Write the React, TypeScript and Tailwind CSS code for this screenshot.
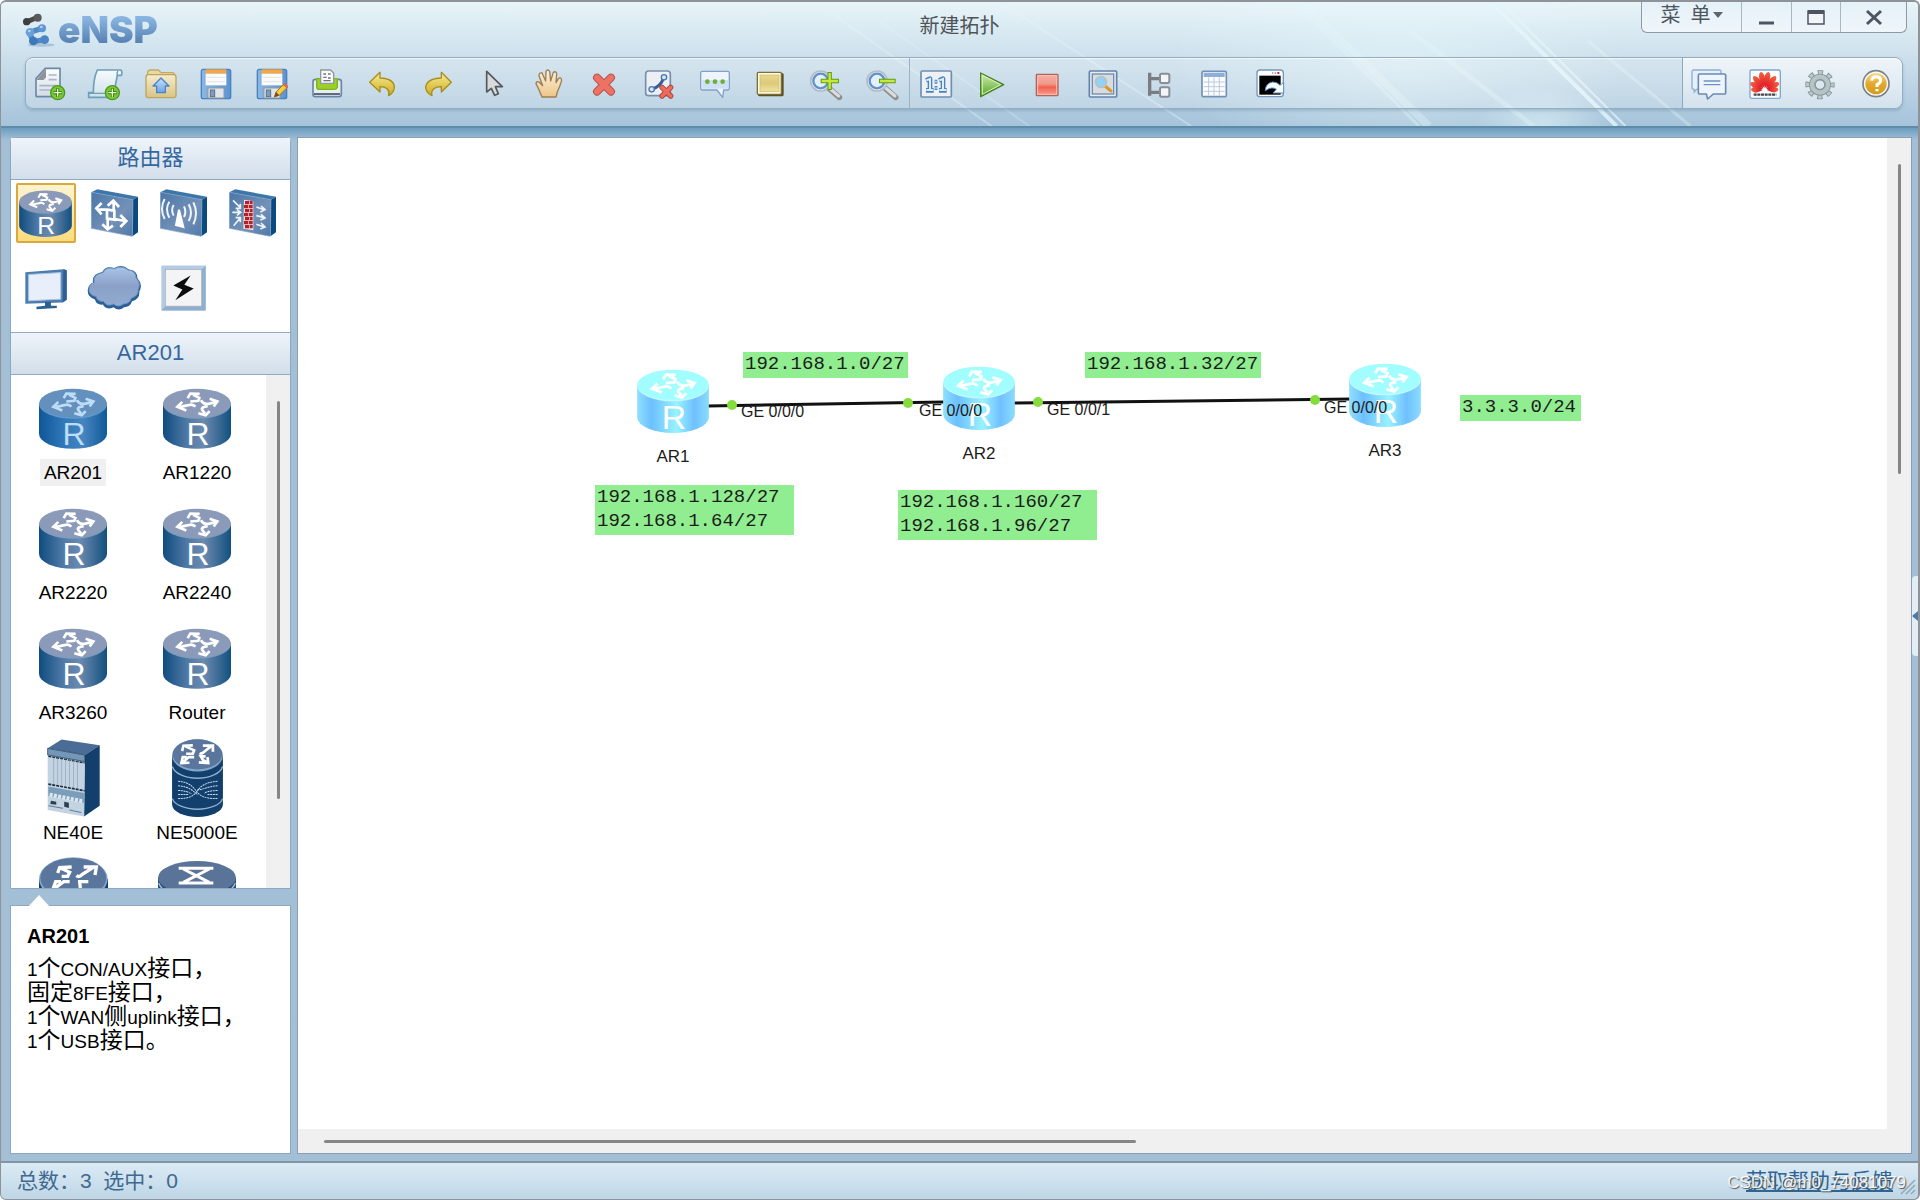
import React from "react";

type IconProps = { left: number; children: React.ReactNode };

/* Toolbar drawings share one 108-unit square, three units to the pixel. */
function ToolIcon({ left, children }: IconProps) {
  return (
    <svg className="size-9 shrink-0" viewBox={`${left - 54} 195 108 108`} aria-hidden="true">
      {children}
    </svg>
  );
}

function Defs() {
  return (
    <svg className="absolute size-0" aria-hidden="true">
      <defs>
        <linearGradient id="body" x1="0" x2="1">
          <stop offset="0" stopColor="#0f4c7f" />
          <stop offset="0.35" stopColor="#4f79a7" />
          <stop offset="0.6" stopColor="#6b8aaf" />
          <stop offset="1" stopColor="#12507f" />
        </linearGradient>
        <linearGradient id="bodySelected" x1="0" x2="1">
          <stop offset="0" stopColor="#0e5698" />
          <stop offset="0.35" stopColor="#2f77b8" />
          <stop offset="0.65" stopColor="#4585c0" />
          <stop offset="1" stopColor="#105a98" />
        </linearGradient>
        <linearGradient id="bodyLive" x1="0" x2="1">
          <stop offset="0" stopColor="#8fe0ff" />
          <stop offset="0.2" stopColor="#6cc0ff" />
          <stop offset="0.55" stopColor="#98f2ff" />
          <stop offset="0.8" stopColor="#70c0ff" />
          <stop offset="1" stopColor="#8adcff" />
        </linearGradient>
        <linearGradient id="face" x1="0" y1="0" x2="1" y2="1">
          <stop offset="0" stopColor="#4b77a8" />
          <stop offset="0.6" stopColor="#7391b8" />
          <stop offset="1" stopColor="#4f79a8" />
        </linearGradient>
        <linearGradient id="cloud" x1="0" y1="0" x2="0" y2="1">
          <stop offset="0" stopColor="#a9c3e6" />
          <stop offset="0.5" stopColor="#8aa0c8" />
          <stop offset="1" stopColor="#93abd0" />
        </linearGradient>
        <linearGradient id="paper" x1="0" y1="0" x2="0" y2="1">
          <stop offset="0" stopColor="#ffffff" />
          <stop offset="1" stopColor="#d3dbe4" />
        </linearGradient>
        <linearGradient id="scroll" x1="0" y1="0" x2="0" y2="1">
          <stop offset="0" stopColor="#f6fbfd" />
          <stop offset="1" stopColor="#cfe0ea" />
        </linearGradient>
        <linearGradient id="gold" x1="0" y1="0" x2="0" y2="1">
          <stop offset="0" stopColor="#f8ee98" />
          <stop offset="1" stopColor="#cfa91c" />
        </linearGradient>
        <linearGradient id="tan" x1="0" y1="0" x2="0" y2="1">
          <stop offset="0" stopColor="#f6eccb" />
          <stop offset="1" stopColor="#d8c488" />
        </linearGradient>
        <linearGradient id="green" x1="0" y1="0" x2="0" y2="1">
          <stop offset="0" stopColor="#d5f0b8" />
          <stop offset="1" stopColor="#4fa51f" />
        </linearGradient>
        <linearGradient id="red" x1="0" y1="0" x2="0" y2="1">
          <stop offset="0" stopColor="#f4b0a4" />
          <stop offset="0.45" stopColor="#f09a8d" />
          <stop offset="0.6" stopColor="#f4604e" />
          <stop offset="1" stopColor="#f7a192" />
        </linearGradient>
        <linearGradient id="blue" x1="0" y1="0" x2="0" y2="1">
          <stop offset="0" stopColor="#c8e2fb" />
          <stop offset="1" stopColor="#6da4e4" />
        </linearGradient>
        <linearGradient id="disk" x1="0" x2="1">
          <stop offset="0" stopColor="#8cb7e4" />
          <stop offset="1" stopColor="#5b93d2" />
        </linearGradient>
        <linearGradient id="hand" x1="0" y1="0" x2="0" y2="1">
          <stop offset="0" stopColor="#fdf3de" />
          <stop offset="1" stopColor="#ecc588" />
        </linearGradient>
        <linearGradient id="note" x1="0" y1="0" x2="0" y2="1">
          <stop offset="0" stopColor="#e6d88f" />
          <stop offset="0.5" stopColor="#ddca78" />
          <stop offset="1" stopColor="#efe3a0" />
        </linearGradient>
        <linearGradient id="help" x1="0" y1="0" x2="0" y2="1">
          <stop offset="0" stopColor="#f6dc8c" />
          <stop offset="0.5" stopColor="#e3a92c" />
          <stop offset="1" stopColor="#d49a20" />
        </linearGradient>
        <linearGradient id="petal" x1="0" y1="0" x2="0" y2="1">
          <stop offset="0" stopColor="#f4653f" />
          <stop offset="1" stopColor="#dd1026" />
        </linearGradient>
        <radialGradient id="glow">
          <stop offset="0" stopColor="#e6f8fb" stopOpacity="0.55" />
          <stop offset="1" stopColor="#e6f8fb" stopOpacity="0" />
        </radialGradient>
      </defs>
    </svg>
  );
}

/* ---------- toolbar icons ---------- */

function PlusBadge({ x, y }: { x: number; y: number }) {
  return (
    <g>
      <circle cx={x} cy={y} r="21" fill="#7cc63a" stroke="#4b9a1c" strokeWidth="4" />
      <path d={`M${x - 13} ${y}h26M${x} ${y - 13}v26`} stroke="#2f7a12" strokeWidth="9" />
      <path d={`M${x - 12} ${y}h24M${x} ${y - 12}v24`} stroke="#e9f9c8" strokeWidth="4" />
    </g>
  );
}

function Floppy({ x }: { x: number }) {
  return (
    <g>
      <rect x={x} y="208" width="88" height="88" rx="6" fill="url(#disk)" stroke="#4a80bf" strokeWidth="4" />
      <rect x={x + 13} y="208" width="62" height="13" fill="#f5a742" />
      <rect x={x + 13} y="221" width="62" height="35" fill="#fbfbfb" />
      <path d={`M${x + 18} 232h52M${x + 18} 245h52`} stroke="#dfe3e8" strokeWidth="3" />
      <rect x={x + 20} y="264" width="48" height="30" fill="#e3e6e8" stroke="#8b98a6" strokeWidth="3" />
      <rect x={x + 27} y="270" width="13" height="20" fill="#7d9cc0" stroke="#5c6f84" strokeWidth="3" />
    </g>
  );
}

function Lens({ x }: { x: number }) {
  return (
    <g>
      <path d={`M${x + 24} 264l32 28`} stroke="#8d8f92" strokeWidth="17" strokeLinecap="round" />
      <path d={`M${x + 26} 264l28 24`} stroke="#dcdddf" strokeWidth="9" strokeLinecap="round" />
      <circle cx={x} cy="243" r="30" fill="#e8ecef" stroke="#b4bcc3" strokeWidth="5" />
      <circle cx={x} cy="243" r="22" fill="#e3f0fb" stroke="#5e93cf" strokeWidth="7" />
    </g>
  );
}

const editTools: { name: string; icon: React.ReactNode }[] = [
  {
    name: "新建拓扑",
    icon: (
      <ToolIcon left={148}>
        <path d="M106 288V236L134 205H178V290H108Z" fill="url(#paper)" stroke="#6a89a8" strokeWidth="5" />
        <path d="M107 240L136 206V240Z" fill="#8f9499" />
        <path d="M120 250L136 232V250Z" fill="#e9eef2" />
        <path d="M144 225h24M144 239h24M116 257h52M116 270h34" stroke="#a5b7c8" strokeWidth="5" />
        <PlusBadge x={171} y={278} />
      </ToolIcon>
    ),
  },
  {
    name: "新建试卷工程",
    icon: (
      <ToolIcon left={315}>
        <path d="M292 210H362Q368 214 364 226H352Q346 254 342 282Q336 292 326 292H266V278H280Q280 236 292 210Z" fill="url(#scroll)" stroke="#6d9fb9" strokeWidth="5" />
        <path d="M266 280H330M354 212Q350 218 352 226" fill="none" stroke="#6d9fb9" strokeWidth="4" />
        <PlusBadge x={337} y={278} />
      </ToolIcon>
    ),
  },
  {
    name: "打开",
    icon: (
      <ToolIcon left={484}>
        <path d="M444 226V216Q446 210 452 210H476L484 218H520Q526 220 526 228" fill="#ead9a8" stroke="#c2a964" strokeWidth="4" />
        <rect x="439" y="224" width="90" height="69" rx="7" fill="url(#tan)" stroke="#bfa45c" strokeWidth="4" />
        <path d="M484 234L508 258H497V278H471V258H460Z" fill="url(#blue)" stroke="#4c84cc" strokeWidth="4" strokeLinejoin="round" />
      </ToolIcon>
    ),
  },
  { name: "保存", icon: <ToolIcon left={648}><Floppy x={604} /></ToolIcon> },
  {
    name: "另存为",
    icon: (
      <ToolIcon left={815}>
        <Floppy x={771} />
        <path d="M822 291L827 276L852 251L862 261L837 286Z" fill="#f8cd3c" stroke="#a8701f" strokeWidth="3" />
        <path d="M822 291L827 276L837 286Z" fill="#7a4a20" />
        <path d="M848 255L854 249L864 259L858 265Z" fill="#e06a50" />
      </ToolIcon>
    ),
  },
  {
    name: "打印",
    icon: (
      <ToolIcon left={985}>
        <rect x="943" y="238" width="85" height="52" rx="7" fill="#e9edf1" stroke="#6b86a5" strokeWidth="5" />
        <path d="M954 236H1016V262Q1014 268 1008 268H962Q954 268 954 260Z" fill="#9bd028" stroke="#7fb41a" strokeWidth="4" />
        <path d="M966 210H996L1005 220V250H966Z" fill="#fafafa" stroke="#9098a2" strokeWidth="4" />
        <path d="M974 222h8M988 222h8M974 232h10M988 234h8M974 242h22" stroke="#70757c" strokeWidth="4" />
        <path d="M946 282H1024" stroke="#5b6c7f" strokeWidth="6" />
      </ToolIcon>
    ),
  },
  {
    name: "撤销",
    icon: (
      <ToolIcon left={1144}>
        <path d="M1107 247L1138 217V234Q1182 236 1181 264Q1178 280 1164 287Q1170 262 1138 260V276Z" fill="url(#gold)" stroke="#a58f1c" strokeWidth="4" strokeLinejoin="round" />
      </ToolIcon>
    ),
  },
  {
    name: "恢复",
    icon: (
      <ToolIcon left={1312}>
        <path d="M1352 247L1322 217V234Q1276 236 1275 264Q1278 280 1294 287Q1288 262 1322 260V276Z" fill="url(#gold)" stroke="#a58f1c" strokeWidth="4" strokeLinejoin="round" />
      </ToolIcon>
    ),
  },
  {
    name: "选择",
    icon: (
      <ToolIcon left={42}>
        <path d="M23 214V276L37 265L47 286L58 281L49 260H70Z" fill="#d8dadc" stroke="#55585c" strokeWidth="5" strokeLinejoin="round" />
      </ToolIcon>
    ),
  },
  {
    name: "拖动",
    icon: (
      <ToolIcon left={208}>
        <path
          d="M187 291Q178 268 169 251Q170 243 178 246L189 257L178 227Q178 217 187 219L198 243L199 214Q204 206 210 214L213 243L221 217Q229 212 231 221L229 248L236 236Q245 230 246 241Q240 262 234 273L229 291Z"
          fill="url(#hand)"
          stroke="#9c7f55"
          strokeWidth="4"
          strokeLinejoin="round"
        />
      </ToolIcon>
    ),
  },
  {
    name: "删除",
    icon: (
      <ToolIcon left={375}>
        <path d="M354 233L396 275M396 233L354 275" stroke="#b8564e" strokeWidth="24" strokeLinecap="round" />
        <path d="M354 233L396 275M396 233L354 275" stroke="#ee7264" strokeWidth="18" strokeLinecap="round" />
      </ToolIcon>
    ),
  },
  {
    name: "删除所有连线",
    icon: (
      <ToolIcon left={541}>
        <rect x="501" y="213" width="74" height="74" rx="9" fill="#eceff3" stroke="#7590ae" strokeWidth="5" />
        <path d="M519 268Q545 262 556 232" fill="none" stroke="#355f92" strokeWidth="9" />
        <circle cx="556" cy="232" r="8" fill="#d4e4f7" stroke="#4a77ae" strokeWidth="4" />
        <circle cx="519" cy="268" r="8" fill="#d4e4f7" stroke="#4a77ae" strokeWidth="4" />
        <path d="M550 262L576 288M576 262L550 288" stroke="#a3443c" strokeWidth="16" strokeLinecap="round" />
        <path d="M550 262L576 288M576 262L550 288" stroke="#ee6a5c" strokeWidth="11" strokeLinecap="round" />
      </ToolIcon>
    ),
  },
  {
    name: "文本",
    icon: (
      <ToolIcon left={706}>
        <path d="M668 214H744Q749 214 749 219V265Q749 270 744 270H732L729 292L712 270H668Q663 270 663 265V219Q663 214 668 214Z" fill="#edf4fc" stroke="#7fa2cb" strokeWidth="4" strokeLinejoin="round" />
        <path d="M668 240H745V266H668Z" fill="#cfe0f6" />
        <circle cx="683" cy="245" r="7" fill="#6fae35" />
        <circle cx="706" cy="245" r="7" fill="#6fae35" />
        <circle cx="729" cy="245" r="7" fill="#6fae35" />
      </ToolIcon>
    ),
  },
  {
    name: "调色板",
    icon: (
      <ToolIcon left={868}>
        <rect x="832" y="219" width="77" height="70" rx="5" fill="#5d5122" />
        <rect x="830" y="217" width="72" height="66" rx="3" fill="#fdf9e3" stroke="#7d6f35" strokeWidth="4" />
        <rect x="838" y="225" width="57" height="50" fill="url(#note)" stroke="#c9b865" strokeWidth="2" />
      </ToolIcon>
    ),
  },
  {
    name: "放大",
    icon: (
      <ToolIcon left={1039}>
        <Lens x={1026} />
        <path d="M1026 243H1081M1053 216V270" stroke="#5d9c17" strokeWidth="13" />
        <path d="M1029 243H1078M1053 219V267" stroke="#c9e83a" strokeWidth="7" />
      </ToolIcon>
    ),
  },
  {
    name: "缩小",
    icon: (
      <ToolIcon left={1204}>
        <Lens x={1192} />
        <path d="M1198 243H1248" stroke="#5d9c17" strokeWidth="13" />
        <path d="M1201 243H1245" stroke="#c9e83a" strokeWidth="7" />
      </ToolIcon>
    ),
  },
];

const viewTools: { name: string; icon: React.ReactNode }[] = [
  {
    name: "原始大小",
    icon: (
      <ToolIcon left={110}>
        <rect x="65" y="213" width="91" height="78" rx="4" fill="#eef1f4" stroke="#6f8eb2" strokeWidth="5" />
        <path d="M80 241L92 236V271M80 271H103M119 241L131 236V271M119 271H142" fill="none" stroke="#4b83bf" strokeWidth="14" strokeLinejoin="round" />
        <path d="M106 245H114M106 264H114" stroke="#4b83bf" strokeWidth="12" />
        <path d="M81 241L92 237V270M81 270H102M120 241L131 237V270M120 270H141" fill="none" stroke="#dceefb" strokeWidth="6" />
        <path d="M108 245H112M108 264H112" stroke="#dceefb" strokeWidth="5" />
      </ToolIcon>
    ),
  },
  {
    name: "开启设备",
    icon: (
      <ToolIcon left={279}>
        <path d="M245 219L314 254L245 290Z" fill="url(#green)" stroke="#4b8226" strokeWidth="4" strokeLinejoin="round" />
        <path d="M250 226L305 254L250 283Z" fill="none" stroke="#d4efbd" strokeWidth="3" />
      </ToolIcon>
    ),
  },
  {
    name: "停止设备",
    icon: (
      <ToolIcon left={443}>
        <rect x="411" y="223" width="65" height="64" rx="2" fill="url(#red)" stroke="#b0655c" strokeWidth="4" />
        <rect x="415" y="227" width="57" height="56" fill="none" stroke="#f7beb3" strokeWidth="3" />
      </ToolIcon>
    ),
  },
  {
    name: "采集数据报文",
    icon: (
      <ToolIcon left={610}>
        <rect x="569" y="213" width="82" height="78" rx="3" fill="#e8edf2" stroke="#6483aa" strokeWidth="5" />
        <rect x="578" y="222" width="64" height="60" fill="#d9dcdf" stroke="#6e8db4" strokeWidth="4" />
        <path d="M616 258L634 273" stroke="#d79a2c" strokeWidth="9" strokeLinecap="round" />
        <circle cx="604" cy="246" r="16" fill="#8fd3f5" stroke="#b5c3ce" strokeWidth="6" />
      </ToolIcon>
    ),
  },
  {
    name: "显示所有接口",
    icon: (
      <ToolIcon left={778}>
        <path d="M750 218V287M750 236H782M750 277H782" fill="none" stroke="#7a7d80" strokeWidth="10" />
        <rect x="781" y="221" width="28" height="28" rx="5" fill="#f3f5f7" stroke="#868f98" strokeWidth="6" />
        <rect x="781" y="262" width="28" height="28" rx="5" fill="#f3f5f7" stroke="#868f98" strokeWidth="6" />
      </ToolIcon>
    ),
  },
  {
    name: "显示网格",
    icon: (
      <ToolIcon left={942}>
        <rect x="906" y="214" width="73" height="76" rx="4" fill="#fbfcfe" stroke="#7291b6" strokeWidth="5" />
        <rect x="911" y="219" width="63" height="12" fill="#8caed8" />
        <path d="M911 246H974M911 260H974M911 274H974M926 232V287M942 232V287M958 232V287" stroke="#b9cade" strokeWidth="3" />
      </ToolIcon>
    ),
  },
  {
    name: "打开所有CLI",
    icon: (
      <ToolIcon left={1112}>
        <rect x="1073" y="210" width="79" height="80" rx="9" fill="#fbfcfe" stroke="#7796bb" strokeWidth="4" />
        <rect x="1080" y="227" width="64" height="57" fill="#000000" />
        <path d="M1118 219h4M1126 219h4" stroke="#9098a2" strokeWidth="4" />
        <path d="M1134 219h6" stroke="#e6202a" strokeWidth="6" />
        <path d="M1098 272Q1098 250 1120 246Q1134 246 1142 256L1153 247V279H1121L1131 268Q1118 258 1098 272Z" fill="#f8fbff" stroke="#5b8bc4" strokeWidth="3" />
      </ToolIcon>
    ),
  },
];

const petals = [
  { angle: -12, reach: 0 },
  { angle: 12, reach: 0 },
  { angle: -39, reach: 2 },
  { angle: 39, reach: 2 },
  { angle: -64, reach: 7 },
  { angle: 64, reach: 7 },
  { angle: -88, reach: 14 },
  { angle: 88, reach: 14 },
];

const helpTools: { name: string; icon: React.ReactNode }[] = [
  {
    name: "论坛",
    icon: (
      <ToolIcon left={628}>
        <path d="M582 210H659Q664 210 664 215V262Q664 268 659 268H590L584 276L583 268Q577 268 577 262V215Q577 210 582 210Z" fill="#e7effa" stroke="#8caed2" strokeWidth="4" />
        <path d="M600 222H674Q678 222 678 226V278Q678 282 674 282H641L624 297L620 282H600Q596 282 596 278V226Q596 222 600 222Z" fill="#eef4fc" stroke="#6a8bb2" strokeWidth="5" strokeLinejoin="round" />
        <path d="M612 243H662M612 254H662" stroke="#6d93c0" strokeWidth="4" />
      </ToolIcon>
    ),
  },
  {
    name: "官网",
    icon: (
      <ToolIcon left={794}>
        <rect x="749" y="210" width="91" height="85" rx="5" fill="#fdfdff" stroke="#7da6d3" strokeWidth="4" />
        {petals.map((p) => (
          <path
            key={p.angle}
            d={`M793 264Q781 242 785 ${226 + p.reach}Q788 ${215 + p.reach} 793 ${215 + p.reach}Q798 ${215 + p.reach} 801 ${226 + p.reach}Q803 242 793 264Z`}
            fill="url(#petal)"
            transform={`rotate(${p.angle} 793 270)`}
          />
        ))}
        <path d="M760 284H828" stroke="#45474c" strokeWidth="7" strokeDasharray="9 2" />
      </ToolIcon>
    ),
  },
  {
    name: "设置",
    icon: (
      <ToolIcon left={965}>
        <circle cx="965" cy="254" r="37" fill="none" stroke="#87979c" strokeWidth="14" strokeDasharray="16 13.06" strokeDashoffset="8" />
        <circle cx="965" cy="254" r="36" fill="none" stroke="#bdc9cb" strokeWidth="11" strokeDasharray="10 18.27" strokeDashoffset="5" />
        <circle cx="965" cy="254" r="23" fill="none" stroke="#87979c" strokeWidth="20" />
        <circle cx="965" cy="254" r="23" fill="none" stroke="#b7c4c6" strokeWidth="15" />
        <circle cx="965" cy="254" r="15" fill="none" stroke="#8b9ca1" strokeWidth="5" />
        <circle cx="965" cy="254" r="11" fill="#dce8ee" />
      </ToolIcon>
    ),
  },
  {
    name: "帮助",
    icon: (
      <ToolIcon left={1128}>
        <circle cx="1128" cy="251" r="39" fill="#f8f8f8" stroke="#7e8287" strokeWidth="5" />
        <circle cx="1128" cy="251" r="32" fill="url(#help)" />
        <path d="M1115 242Q1116 230 1129 230Q1142 231 1142 242Q1141 250 1131 254V261M1131 267V274" fill="none" stroke="#ffffff" strokeWidth="9" />
      </ToolIcon>
    ),
  },
];

function ToolButtons({ tools }: { tools: { name: string; icon: React.ReactNode }[] }) {
  return (
    <>
      {tools.map((tool) => (
        <button key={tool.name} type="button" aria-label={tool.name} className="flex h-12 w-12 items-center justify-center">
          {tool.icon}
        </button>
      ))}
    </>
  );
}

/* ---------- device drawings ---------- */

const routerArrows =
  "M82 40L106 38L109 29L90 20M74 30L82 16L110 17M114 36Q120 49 136 47L158 42M140 32L163 40L152 55M97 56Q90 46 76 51L52 56M58 41L43 56L70 67M134 54Q112 57 118 66L126 76M106 75L128 81L140 69";

const routerTones = {
  normal: { body: "url(#body)", top: "#8a9ab8", edge: "#7d9dbd", ink: "#ffffff" },
  selected: { body: "url(#bodySelected)", top: "#6490bd", edge: "#5d9bd0", ink: "#bddcf5" },
  live: { body: "url(#bodyLive)", top: "#a2fdff", edge: "#c4f8ff", ink: "#ffffff" },
};

function RouterIcon({ tone, className }: { tone: keyof typeof routerTones; className: string }) {
  const t = routerTones[tone];
  return (
    <svg viewBox="0 0 204 182" overflow="visible" className={className} aria-hidden="true">
      <path d="M0 46V137A102 45 0 0 0 204 137V46Z" fill={t.body} />
      <ellipse cx="102" cy="48" rx="102" ry="44" fill={t.edge} />
      <ellipse cx="102" cy="45" rx="101" ry="43" fill={t.top} />
      <path d={routerArrows} fill="none" stroke={t.ink} strokeWidth="8" />
      <text x="105" y="171" textAnchor="middle" fontFamily="Liberation Sans, sans-serif" fontSize="96" fill={t.ink}>
        R
      </text>
    </svg>
  );
}

function ChassisIcon() {
  return (
    <svg viewBox="138 55 160 233" className="h-[78px] w-[53px]" aria-hidden="true">
      <path d="M140 82L182 55L297 73L252 102Z" fill="#4a6c96" />
      <path d="M252 102L297 73V255L250 288Z" fill="#123f6c" />
      <path d="M140 82L252 102L250 288L140 268Z" fill="#c3d3e2" />
      <path d="M140 82L252 102V122L140 102Z" fill="#7397b8" stroke="#17324e" strokeWidth="2" />
      <path d="M142 106L252 126" stroke="#1d2c3c" strokeWidth="4" strokeDasharray="9 3" />
      <path d="M158 110V190M170 112V192M182 114V194M194 116V196M206 118V198M218 120V200M230 122V202" stroke="#89a4bd" strokeWidth="2" />
      <path d="M142 190L252 210" stroke="#1d2c3c" strokeWidth="5" strokeDasharray="9 3" />
      <path d="M142 197L250 217V246L142 226Z" fill="#7b9cba" />
      <path d="M146 222L248 242" stroke="#dce7f0" strokeWidth="12" strokeDasharray="9 4" />
      <path d="M150 240L166 243V252L148 250ZM190 243L204 246V262L190 258Z" fill="#2c3f52" />
      <path d="M142 255L186 263M206 268L242 276" stroke="#5b7a98" strokeWidth="3" />
    </svg>
  );
}

function CoreRouterIcon() {
  return (
    <svg viewBox="0 0 152 233" className="h-[78px] w-[51px]" aria-hidden="true">
      <path d="M0 48V195A76 38 0 0 0 152 195V48Z" fill="#123f6c" />
      <path d="M1 82A76 42 0 0 0 151 82M1 178A76 38 0 0 0 151 178" fill="none" stroke="#8fb0d0" strokeWidth="4" />
      <ellipse cx="76" cy="49" rx="76" ry="48" fill="#86a8ca" />
      <ellipse cx="76" cy="46" rx="74" ry="45" fill="#5a769c" />
      <path d="M42 44H62L66 34L40 22M30 36L34 20L62 19M82 42Q88 46 96 38L116 22M92 20L122 20L122 38M66 54H50L32 70M44 54H32L28 72L52 71M100 52H86L92 62L104 70M80 70L108 72L106 54" fill="none" stroke="#ffffff" strokeWidth="8" />
      <path d="M18 126C60 130 66 150 76 160S96 178 136 178M18 178C60 178 66 166 76 154S96 130 136 126M18 140C56 142 66 160 76 166M136 140C98 142 88 156 76 150M18 154C40 154 50 160 58 164M136 154C114 154 104 158 96 162M18 166H50M136 166H104" fill="none" stroke="#c4dcf2" strokeWidth="3" strokeDasharray="6 2" />
    </svg>
  );
}

function EdgeRouterIcon() {
  return (
    <svg viewBox="0 0 207 234" className="h-[78px] w-[69px]" aria-hidden="true">
      <path d="M0 66V180A103 50 0 0 0 207 180V66Z" fill="#123f6c" />
      <ellipse cx="103" cy="66" rx="103" ry="65" fill="#86a8ca" />
      <ellipse cx="103" cy="63" rx="99" ry="60" fill="#5a769c" />
      <path d="M68 58H86L92 46L66 34M56 48L62 32L98 30M112 56Q120 62 130 52L162 32M134 30L172 30L168 54M92 74H74L50 92M66 74H50L42 96M148 74H122L124 94" fill="none" stroke="#ffffff" strokeWidth="10" />
    </svg>
  );
}

function HubIcon() {
  return (
    <svg viewBox="0 0 234 222" className="h-[74px] w-[78px]" aria-hidden="true">
      <path d="M0 50V170A117 50 0 0 0 234 170V50Z" fill="#234c7c" />
      <ellipse cx="117" cy="50" rx="117" ry="50" fill="#5a7499" />
      <path d="M2 66A117 60 0 0 0 232 66" fill="none" stroke="#a7c0da" strokeWidth="4" />
      <path d="M62 22H166M62 66H166M76 24L154 64M154 24L76 64" fill="none" stroke="#ffffff" strokeWidth="9" />
    </svg>
  );
}

function SlabFace({ children }: { children: React.ReactNode }) {
  return (
    <svg viewBox="270 178 144 144" className="size-12" aria-hidden="true">
      <path d="M271 188L289 179L411 201L396 210Z" fill="#3d77aa" />
      <path d="M396 210L411 201V308L394 320Z" fill="#0a4a80" />
      <path d="M271 188L396 210L394 320L271 296Z" fill="url(#face)" stroke="#7fa1c6" strokeWidth="2" />
      {children}
    </svg>
  );
}

const deviceTypes: { name: string; icon: React.ReactNode }[] = [
  { name: "路由器", icon: <RouterIcon tone="normal" className="h-[47px] w-[53px]" /> },
  {
    name: "交换机",
    icon: (
      <SlabFace>
        <path d="M318 240L340 243V270L318 267ZM338 243V216M320 228L337 213L354 232M318 240H288M302 220L286 236L302 254M340 268L372 274M358 256L376 274L358 292M320 267V296M304 284L320 299L336 288" fill="none" stroke="#ffffff" strokeWidth="8" />
      </SlabFace>
    ),
  },
  {
    name: "无线局域网",
    icon: (
      <SlabFace>
        <path d="M327 240L318 286L340 292Z" fill="#ffffff" stroke="#ffffff" strokeWidth="6" />
        <path d="M311 226Q302 240 311 258M298 216Q284 238 298 264M284 208Q268 236 284 268M342 230Q350 246 342 262M356 224Q370 250 356 274M370 218Q386 250 370 284" fill="none" stroke="#f1f6fb" strokeWidth="6" />
      </SlabFace>
    ),
  },
  {
    name: "防火墙",
    icon: (
      <SlabFace>
        <path d="M315 210L343 215V302L313 297Z" fill="#f3dede" />
        <path d="M318 219H341M315 231H341M318 243H341M315 255H341M318 267H341M315 279H341M318 291H341" stroke="#b5202a" strokeWidth="10" strokeDasharray="12 2" />
        <path d="M282 212L304 234M304 222V236H290M280 248H304M294 240L305 248L294 257M284 288L304 264M290 264H304V278M352 232L376 240M366 229L378 240L364 247M352 258L376 264M366 254L378 265L364 271M352 284L376 292M366 280L378 292L364 298" fill="none" stroke="#eef4fa" strokeWidth="5" />
      </SlabFace>
    ),
  },
  {
    name: "终端",
    icon: (
      <svg viewBox="70 405 134 134" className="h-11 w-11" aria-hidden="true">
        <path d="M74 424L190 415L200 418V508L188 516L74 520Z" fill="#4d7dae" />
        <path d="M190 415L200 418V508L188 516Z" fill="#2d5f93" />
        <path d="M84 431L182 425V506L84 511Z" fill="#e9effa" stroke="#a9c3e2" strokeWidth="3" />
        <path d="M134 514H152V526H170V533L108 537V529L134 526Z" fill="#2d5f93" />
      </svg>
    ),
  },
  {
    name: "其它设备",
    icon: (
      <svg viewBox="260 400 166 144" className="h-12 w-[55px]" aria-hidden="true">
        <path
          d="M284 507Q258 498 263 474Q266 460 278 456Q274 430 306 424Q316 404 342 412Q366 398 386 416Q412 418 412 442Q430 462 418 482Q420 506 396 512Q390 530 372 530Q356 544 340 530Q318 540 308 522Q288 524 284 507Z"
          fill="#2a5f97"
        />
        <path
          d="M288 498Q262 492 267 470Q270 458 282 456Q276 432 308 426Q318 406 342 414Q366 402 384 418Q408 420 408 442Q424 458 414 476Q416 496 394 502Q388 520 370 520Q354 532 340 520Q320 530 310 512Q292 514 288 498Z"
          fill="url(#cloud)"
          stroke="#6f97c6"
          strokeWidth="3"
        />
      </svg>
    ),
  },
  {
    name: "设备连线",
    icon: (
      <svg viewBox="481 405 135 137" className="h-[46px] w-[45px]" aria-hidden="true">
        <rect x="482" y="406" width="133" height="135" fill="#b4cbe6" />
        <path d="M615 406V541H482L494 528H603V418Z" fill="#8eaed2" />
        <rect x="494" y="418" width="109" height="110" fill="#f3f4f6" stroke="#a9a9ad" strokeWidth="2" />
        <path d="M570 436L518 466L545 478L524 510L579 475L551 464Z" fill="#0c0c0c" />
      </svg>
    ),
  },
];

const models: { name: string; icon: React.ReactNode }[] = [
  { name: "AR201", icon: <RouterIcon tone="selected" className="h-[61px] w-[68px]" /> },
  { name: "AR1220", icon: <RouterIcon tone="normal" className="h-[61px] w-[68px]" /> },
  { name: "AR2220", icon: <RouterIcon tone="normal" className="h-[61px] w-[68px]" /> },
  { name: "AR2240", icon: <RouterIcon tone="normal" className="h-[61px] w-[68px]" /> },
  { name: "AR3260", icon: <RouterIcon tone="normal" className="h-[61px] w-[68px]" /> },
  { name: "Router", icon: <RouterIcon tone="normal" className="h-[61px] w-[68px]" /> },
  { name: "NE40E", icon: <ChassisIcon /> },
  { name: "NE5000E", icon: <CoreRouterIcon /> },
];

function Logo() {
  return (
    <div className="flex items-center gap-0.5 pl-[21px]">
      <svg viewBox="66 38 102 102" className="size-[34px]" aria-hidden="true">
        <ellipse cx="124" cy="134" rx="40" ry="5" fill="#a9c3d8" />
        <path d="M78 66L114 50" stroke="#4a4a4c" strokeWidth="15" strokeLinecap="round" />
        <circle cx="80" cy="64" r="11" fill="#3e3e40" />
        <circle cx="113" cy="52" r="12" fill="#58595b" />
        <path d="M126 84L88 96L100 124L134 118" fill="none" stroke="#4f89c6" strokeWidth="16" strokeLinejoin="round" />
        <circle cx="126" cy="84" r="12" fill="#5e97d2" />
        <circle cx="90" cy="96" r="13" fill="#6aa0d8" />
        <circle cx="100" cy="122" r="13" fill="#3d78b8" />
        <circle cx="134" cy="118" r="13" fill="#4a86c6" />
        <circle cx="88" cy="92" r="4" fill="#b8d4f0" />
        <circle cx="124" cy="80" r="4" fill="#b8d4f0" />
      </svg>
      <h1 className="bg-linear-to-b from-[#8ab4e0] from-20% to-[#557fb0] to-85% bg-clip-text font-[Inter,sans-serif] text-[37px] leading-10 font-black text-transparent">
        eNSP
      </h1>
    </div>
  );
}

function Streaks() {
  return (
    <svg className="pointer-events-none absolute inset-0 h-full w-full" viewBox="0 0 1920 126" preserveAspectRatio="none" aria-hidden="true">
      <ellipse cx="1400" cy="60" rx="230" ry="110" fill="url(#glow)" />
      <ellipse cx="1545" cy="126" rx="70" ry="40" fill="url(#glow)" />
      <g stroke="#e4f6fa" fill="none">
        <path d="M830 10L992 126" strokeWidth="2" opacity="0.4" />
        <path d="M1000 0L1192 126" strokeWidth="2" opacity="0.4" />
        <path d="M880 20L1030 126" strokeWidth="2" opacity="0.25" />
        <path d="M1303 0L1430 126" strokeWidth="8" opacity="0.35" />
        <path d="M1296 0L1420 126" strokeWidth="3" opacity="0.4" />
        <path d="M1412 30L1535 126" strokeWidth="5" opacity="0.35" />
        <path d="M1492 0L1618 126" strokeWidth="4" opacity="0.8" />
        <path d="M1502 0L1627 126" strokeWidth="2" opacity="0.7" />
        <path d="M1590 40L1692 126" strokeWidth="3" opacity="0.35" />
      </g>
    </svg>
  );
}

function WindowControls() {
  return (
    <div className="mr-[11px] flex h-[31px] self-start divide-x divide-[#a9b7c2] justify-self-end rounded-b-md border border-t-0 border-[#8d9aa5] bg-linear-to-b from-[#e4f1f8] to-[#f0f6fa] text-[#4d5560]">
      <button type="button" className="flex w-[100px] items-center justify-center pb-1 text-[20px] leading-6">
        菜&#8194;单
        <svg viewBox="0 0 10 7" className="ml-0.5 h-[7px] w-2.5" aria-hidden="true">
          <path d="M0 0H10L5 6Z" fill="#5c646d" />
        </svg>
      </button>
      <button type="button" aria-label="最小化" className="flex w-[50px] items-center justify-center">
        <svg viewBox="0 0 18 18" className="size-[18px]" aria-hidden="true">
          <path d="M1 15H16" stroke="#4d5560" strokeWidth="3" />
        </svg>
      </button>
      <button type="button" aria-label="最大化" className="flex w-[49px] items-center justify-center">
        <svg viewBox="0 0 18 18" className="size-[18px]" aria-hidden="true">
          <path d="M1 3H17V16H1Z" fill="#f2f5f7" stroke="#4d5560" strokeWidth="1.5" />
          <path d="M1 4H17" stroke="#4d5560" strokeWidth="4" />
        </svg>
      </button>
      <button type="button" aria-label="关闭" className="flex w-[65px] items-center justify-center">
        <svg viewBox="0 0 18 18" className="size-[18px]" aria-hidden="true">
          <path d="M2 3L16 16M16 3L2 16" stroke="#4d5560" strokeWidth="3" />
        </svg>
      </button>
    </div>
  );
}

function Header() {
  return (
    <header className="relative shrink-0 border-b-2 border-[#5d8ba8] bg-linear-to-b from-[#e8f5f9] via-[#c9ddea] via-50% to-[#a5c3da] pb-[17px]">
      <Streaks />
      <div className="relative grid h-[55px] grid-cols-[1fr_auto_1fr]">
        <div className="flex items-start pt-2"><Logo /></div>
        <h2 className="pt-3 text-[20px] leading-6 text-[#4f5357]">新建拓扑</h2>
        <WindowControls />
      </div>
      <div role="toolbar" aria-label="工具栏" className="relative mr-[15px] ml-6 flex h-[52px] rounded-lg border border-[#93adc2] bg-white/20 shadow-[inset_0_1px_1px_rgba(255,255,255,0.7),0_2px_3px_rgba(80,120,150,0.3)]">
        <div className="flex w-[884px] shrink-0 items-center justify-between border-r border-[#9cb3c6] pr-1">
          <ToolButtons tools={editTools} />
        </div>
        <div className="flex w-[386px] shrink-0 items-center justify-between px-0.5">
          <ToolButtons tools={viewTools} />
        </div>
        <div className="ml-auto flex w-[220px] shrink-0 items-center justify-between rounded-r-lg border-l border-[#8fa8bd] bg-linear-to-b from-white/60 to-white/30 px-0.5">
          <ToolButtons tools={helpTools} />
        </div>
      </div>
    </header>
  );
}

function PanelTitle({ children }: { children: React.ReactNode }) {
  return (
    <h3 className="h-[42px] shrink-0 border-b border-[#93a9c0] bg-linear-to-b from-[#eef4fa] to-[#d2deea] pt-1.5 text-center text-[22px] leading-7 text-[#35689e]">
      {children}
    </h3>
  );
}

function Sidebar() {
  return (
    <aside className="flex w-[281px] shrink-0 flex-col">
      <div className="flex min-h-0 flex-1 flex-col rounded-t-md border border-[#8fa8c2] bg-white">
        <PanelTitle>路由器</PanelTitle>
        <div className="grid h-[152px] w-[276px] shrink-0 auto-rows-[60px] grid-cols-4 justify-items-center gap-y-[15px] pt-[3px]">
          {deviceTypes.map((type, i) => (
            <button
              key={type.name}
              type="button"
              aria-label={type.name}
              aria-pressed={i === 0}
              className={
                i === 0
                  ? "flex size-[60px] items-center justify-center rounded-xs border-2 border-[#dba83e] bg-linear-to-b from-[#fdf3cf] to-[#fbdc7c]"
                  : "flex size-[60px] items-center justify-center"
              }
            >
              {type.icon}
            </button>
          ))}
        </div>
        <div className="border-t border-[#93a9c0]">
          <PanelTitle>AR201</PanelTitle>
        </div>
        <div className="flex min-h-0 flex-1 justify-between">
          <div className="grid w-[248px] auto-rows-[120px] grid-cols-2 overflow-hidden pt-0.5">
            {models.map((model, i) => (
              <button key={model.name} type="button" className="flex flex-col items-center">
                <span className="flex h-[82px] items-center justify-center">{model.icon}</span>
                <span className={i === 0 ? "bg-[#f0f0f0] px-1 text-[19px] leading-[27px]" : "px-1 text-[19px] leading-[27px]"}>
                  {model.name}
                </span>
              </button>
            ))}
            <button type="button" aria-label="NE9000" className="flex justify-center"><EdgeRouterIcon /></button>
            <button type="button" aria-label="CX" className="flex justify-center pt-1"><HubIcon /></button>
          </div>
          <div className="flex w-6 shrink-0 justify-center bg-[#f0f0f0] pt-[26px]">
            <div className="h-[398px] w-[3px] rounded-full bg-[#868686]" />
          </div>
        </div>
      </div>
      <section className="relative mt-4 h-[249px] shrink-0 border border-[#8fa8c2] bg-white px-4 pt-4 text-black">
        <svg viewBox="0 0 22 12" className="absolute -top-[11px] left-[17px] h-3 w-[22px]" aria-hidden="true">
          <path d="M0 12L11 0L22 12Z" fill="#ffffff" />
        </svg>
        <h4 className="text-[20px] leading-7 font-bold">AR201</h4>
        <p className="pt-1.5 text-[19px] leading-6">
          <Mixed text="1个CON/AUX接口，" />
          <Mixed text="固定8FE接口，" />
          <Mixed text="1个WAN侧uplink接口，" />
          <Mixed text="1个USB接口。" />
        </p>
      </section>
    </aside>
  );
}

/* One line of mixed text: the Chinese runs are set larger than the Latin ones. */
function Mixed({ text }: { text: string }) {
  const runs = text.match(/[ -~]+|[^ -~]+/g) ?? [];
  return (
    <span className="block h-6 whitespace-nowrap">
      {runs.map((run, i) => (
        <span key={i} className={/^[ -~]/.test(run) ? "text-[19px]" : "text-[23px]"}>
          {run}
        </span>
      ))}
    </span>
  );
}

/* ---------- topology canvas ---------- */

const nodes = [
  { name: "AR1", x: 339, y: 231 },
  { name: "AR2", x: 645, y: 228 },
  { name: "AR3", x: 1051, y: 225 },
];

const ports = [
  { name: "GE 0/0/0", x: 443, y: 264, dotX: 434, dotY: 267 },
  { name: "GE 0/0/0", x: 621, y: 263, dotX: 610, dotY: 265 },
  { name: "GE 0/0/1", x: 749, y: 262, dotX: 740, dotY: 264 },
  { name: "GE 0/0/0", x: 1026, y: 260, dotX: 1017, dotY: 262 },
];

const notes = [
  { lines: ["192.168.1.0/27"], x: 445, y: 214, width: 165 },
  { lines: ["192.168.1.32/27"], x: 787, y: 214, width: 176 },
  { lines: ["3.3.3.0/24"], x: 1162, y: 257, width: 121 },
  { lines: ["192.168.1.128/27", "192.168.1.64/27"], x: 297, y: 347, width: 199 },
  { lines: ["192.168.1.160/27", "192.168.1.96/27"], x: 600, y: 352, width: 199 },
];

function Topology() {
  return (
    <div className="relative min-w-0 flex-1 overflow-hidden bg-white text-[#1c1c1c]">
      <svg className="absolute inset-0 h-full w-full" aria-hidden="true">
        <path d="M410 268L646 264M716 265L1054 261" stroke="#111111" strokeWidth="3" />
      </svg>
      {nodes.map((n) => (
        <button
          key={n.name}
          type="button"
          className="absolute flex w-[72px] flex-col items-center gap-3 text-[17px] leading-6"
          style={{ left: n.x, top: n.y }}
        >
          <RouterIcon tone="live" className="h-16 w-[72px]" />
          {n.name}
        </button>
      ))}
      <svg className="pointer-events-none absolute inset-0 h-full w-full" aria-hidden="true">
        {ports.map((p) => (
          <circle key={p.dotX} cx={p.dotX} cy={p.dotY} r="5" fill="#85dc3c" />
        ))}
      </svg>
      {ports.map((p) => (
        <span key={p.x} className="absolute text-[16px] leading-5 whitespace-nowrap" style={{ left: p.x, top: p.y }}>
          {p.name}
        </span>
      ))}
      {notes.map((n) => (
        <div
          key={n.x}
          className="absolute bg-[#90ee90] px-0.5 pb-0.5 font-['Liberation_Mono',monospace] text-[19px] leading-6 whitespace-nowrap"
          style={{ left: n.x, top: n.y, width: n.width }}
        >
          {n.lines.map((line) => (
            <div key={line}>{line}</div>
          ))}
        </div>
      ))}
    </div>
  );
}

function Canvas() {
  return (
    <main className="flex min-w-0 flex-1 flex-col border border-[#8b9fb3] bg-[#f0f0f0]">
      <div className="flex min-h-0 flex-1">
        <Topology />
        <div className="flex w-6 shrink-0 justify-center pt-[26px]">
          <div className="h-[310px] w-[3px] rounded-full bg-[#868686]" />
        </div>
      </div>
      <div className="flex h-6 shrink-0 items-center pl-[26px]">
        <div className="h-[3px] w-[812px] rounded-full bg-[#868686]" />
      </div>
    </main>
  );
}

function StatusBar() {
  return (
    <footer className="relative flex h-[38px] shrink-0 items-center justify-between border-t-2 border-[#8296a8] bg-linear-to-b from-[#dcebf5] to-[#bed6e6] pr-[25px] pl-4 text-[#41698f]">
      <p className="text-[21px] leading-8">总数：3&nbsp;&nbsp;选中：0</p>
      <a href="#help" className="text-[21px] leading-8 text-[#2f6493] underline decoration-2 underline-offset-2">获取帮助与反馈</a>
      <span className="absolute top-1.5 right-3 text-[17px] leading-7 whitespace-nowrap text-white/90 [text-shadow:1px_1px_1px_#555]">
        CSDN @m0_74081079
      </span>
      <svg viewBox="0 0 16 16" className="absolute right-0.5 bottom-1 size-4" aria-hidden="true">
        <path d="M1 15L15 1M6 15L15 6M11 15L15 11" stroke="#94a7b5" strokeWidth="1.5" />
      </svg>
    </footer>
  );
}

export default function App() {
  return (
    <div className="flex h-screen flex-col overflow-hidden rounded-md border border-t-2 border-r-2 border-[#8f9296] bg-[#a3bfd6] font-['Liberation_Sans','Noto_Sans_CJK_SC',sans-serif]">
      <Defs />
      <Header />
      <div className="flex min-h-0 flex-1 bg-linear-to-b from-[#6c9dc0] to-[#a3bfd6] to-[12px] pt-[9px] pb-[7px] pl-[9px]">
        <Sidebar />
        <div className="flex min-w-0 flex-1 pl-1.5">
          <Canvas />
        </div>
        <div className="flex w-[6px] shrink-0 items-center">
          <button type="button" aria-label="展开" className="mb-[60px] flex h-20 w-1.5 items-center justify-end rounded-l-sm bg-[#e2edf6]">
            <svg viewBox="0 0 6 10" className="h-2.5 w-1.5" aria-hidden="true">
              <path d="M6 0V10L0 5Z" fill="#4a7ba6" />
            </svg>
          </button>
        </div>
      </div>
      <StatusBar />
    </div>
  );
}
